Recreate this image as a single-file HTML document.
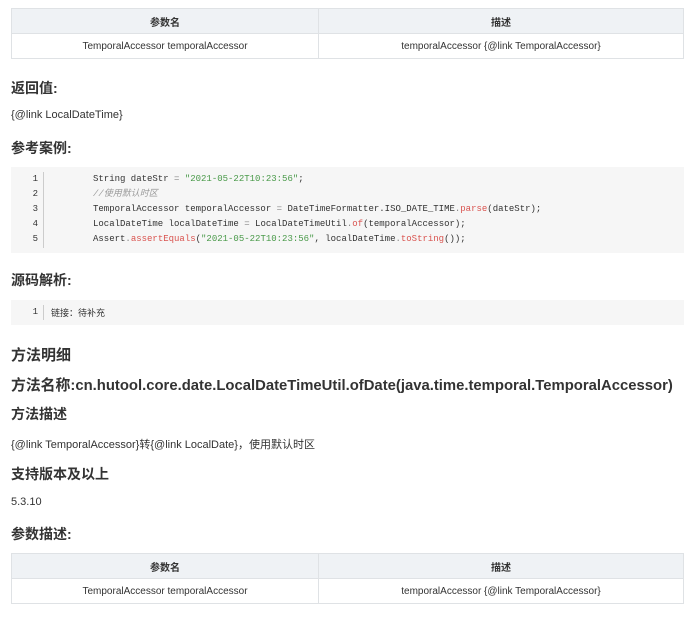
<!DOCTYPE html>
<html><head><meta charset="utf-8"><style>
body{margin:0;width:694px;height:621px;background:#fff;font-family:"Liberation Sans","Noto Sans CJK SC",sans-serif;color:#333;position:relative;overflow:hidden}
.a{position:absolute;white-space:nowrap}
table{position:absolute;left:11px;width:673px;border-collapse:collapse;font-size:10px;color:#333;table-layout:fixed}
td,th{border:1px solid #dfe2e5;text-align:center;height:24px;padding:0}
th{background:#eff2f5;font-weight:bold;font-size:10px}
.code{position:absolute;left:11px;width:673px;background:#f6f6f6}
.ln{position:absolute;left:0;width:27px;text-align:right;font-family:"Liberation Mono",monospace;font-size:9px;line-height:15px;color:#333}
.bar{position:absolute;left:32px;width:1px;background:#ccc}
.src{position:absolute;left:82px;font-family:"Liberation Mono","Noto Sans CJK SC",monospace;font-size:9px;line-height:15px;white-space:pre;color:#333}
.s{color:#4a9a4a}.f{color:#d9534f}.c{color:#999;font-style:italic}.p{color:#888}
</style></head><body>
<table style="top:8px"><colgroup><col style="width:307px"><col></colgroup><tr><th>参数名</th><th>描述</th></tr><tr><td>TemporalAccessor temporalAccessor</td><td>temporalAccessor {@link TemporalAccessor}</td></tr></table>
<div class="a" style="left:11px;top:78px;font-size:14px;font-weight:bold">返回值:</div>
<div class="a" style="left:11px;top:109px;font-size:11px">{@link LocalDateTime}</div>
<div class="a" style="left:11px;top:138px;font-size:14px;font-weight:bold">参考案例:</div>
<div class="code" style="top:167px;height:86px">
<div class="ln" style="top:5px">1<br>2<br>3<br>4<br>5</div>
<div class="bar" style="top:5px;height:76px"></div>
<div class="src" style="top:5px">String dateStr <span class="p">=</span> <span class="s">"2021-05-22T10:23:56"</span>;
<span class="c">//使用默认时区</span>
TemporalAccessor temporalAccessor <span class="p">=</span> DateTimeFormatter.ISO_DATE_TIME<span class="p">.</span><span class="f">parse</span>(dateStr);
LocalDateTime localDateTime <span class="p">=</span> LocalDateTimeUtil<span class="p">.</span><span class="f">of</span>(temporalAccessor);
Assert<span class="p">.</span><span class="f">assertEquals</span>(<span class="s">"2021-05-22T10:23:56"</span>, localDateTime<span class="p">.</span><span class="f">toString</span>());</div>
</div>
<div class="a" style="left:11px;top:270px;font-size:14px;font-weight:bold">源码解析:</div>
<div class="code" style="top:300px;height:25px">
<div class="ln" style="top:5px">1</div>
<div class="bar" style="top:5px;height:15px"></div>
<div class="src" style="left:40px;top:5px;font-family:'Noto Sans CJK SC',sans-serif">链接：待补充</div>
</div>
<div class="a" style="left:11px;top:344px;font-size:15px;font-weight:bold">方法明细</div>
<div class="a" style="left:11px;top:374px;font-size:14.85px;font-weight:bold">方法名称:cn.hutool.core.date.LocalDateTimeUtil.ofDate(java.time.temporal.TemporalAccessor)</div>
<div class="a" style="left:11px;top:404px;font-size:14px;font-weight:bold">方法描述</div>
<div class="a" style="left:11px;top:436px;font-size:11px">{@link TemporalAccessor}转{@link LocalDate}，使用默认时区</div>
<div class="a" style="left:11px;top:464px;font-size:14px;font-weight:bold">支持版本及以上</div>
<div class="a" style="left:11px;top:496px;font-size:11px">5.3.10</div>
<div class="a" style="left:11px;top:524px;font-size:14px;font-weight:bold">参数描述:</div>
<table style="top:553px"><colgroup><col style="width:307px"><col></colgroup><tr><th>参数名</th><th>描述</th></tr><tr><td>TemporalAccessor temporalAccessor</td><td>temporalAccessor {@link TemporalAccessor}</td></tr></table>
</body></html>
